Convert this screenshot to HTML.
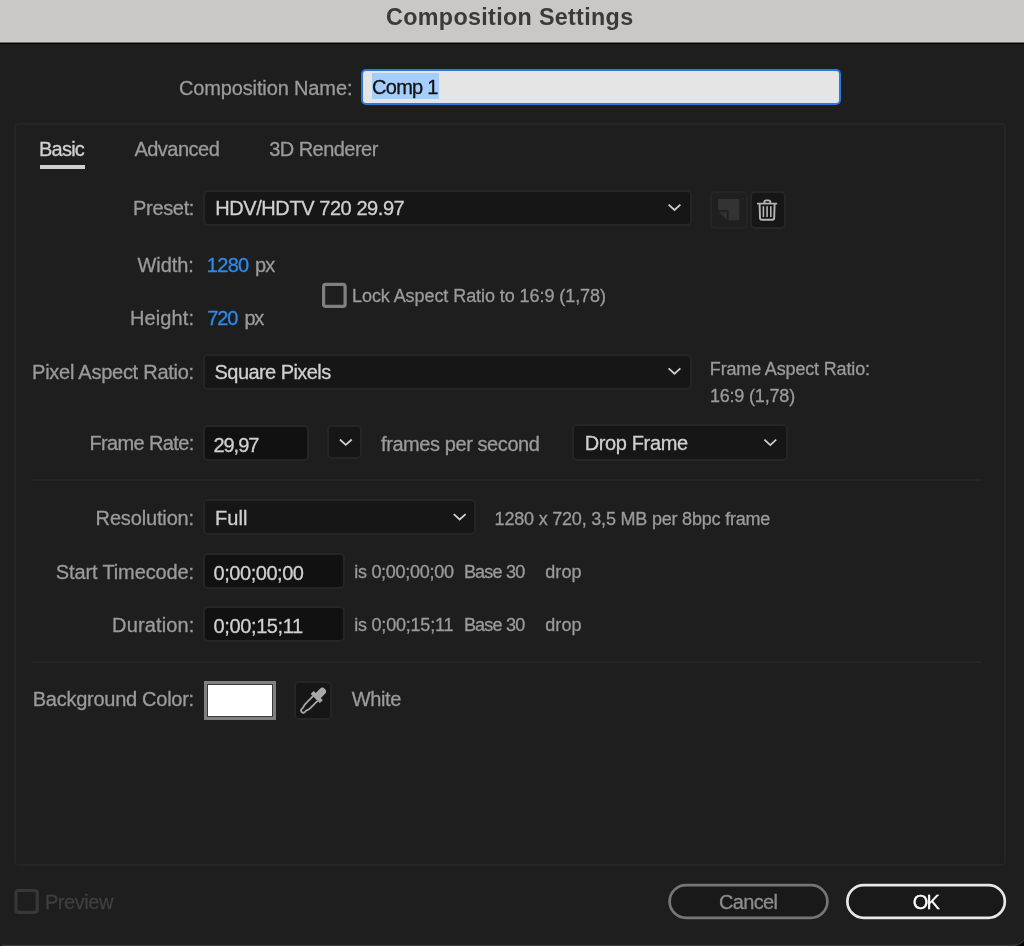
<!DOCTYPE html>
<html lang="en">
<head>
<meta charset="utf-8">
<title>Composition Settings</title>
<style>
html,body{margin:0;padding:0;}
body{width:1024px;height:946px;overflow:hidden;background:#1e1e1e;position:relative;font-family:"Liberation Sans",sans-serif;}
.abs,.t,.dd,.inp,.ibtn,.sep{position:absolute;box-sizing:border-box;}
.t{white-space:nowrap;line-height:1;-webkit-text-stroke:0.3px currentColor;}
#titlebar{left:0;top:0;width:1024px;height:44px;background:linear-gradient(to bottom,#cac8c6 0,#cac8c6 41px,#cfcdcb 41px,#cfcdcb 42px,#6f6e6d 42px,#6f6e6d 43px,#020202 43px,#020202 44px);}
#group{left:14px;top:123px;width:992px;height:743px;border:2px solid #252525;border-radius:5px;}
.dd{background:#161616;border:2px solid #252525;border-radius:5px;height:36px;}
.inp{background:#111111;border:2px solid #252525;border-radius:5px;height:36px;}
.ibtn{background:#161616;border:2px solid #252525;border-radius:5px;}
.sep{height:2px;background:#252525;left:32px;width:950px;}
svg{position:absolute;overflow:visible;}
</style>
</head>
<body>
<div id="titlebar" class="abs"></div>

<!-- composition name field (focused, text selected) -->
<div class="abs" style="left:361px;top:69px;width:480px;height:36px;background:#e5e5e5;border:2px solid #2a78e0;border-radius:5px;"></div>
<div class="abs" style="left:372px;top:73px;width:67px;height:26px;background:#a6cefd;"></div>

<div id="group" class="abs"></div>

<!-- active tab underline -->
<div class="abs" style="left:40px;top:165px;width:45px;height:4px;background:#cfcfcf;"></div>

<!-- preset row -->
<div class="dd" style="left:203px;top:190px;width:489px;"></div>
<div class="ibtn" style="left:710px;top:191px;width:38px;height:38px;background:#1f1f1f;"></div>
<div class="ibtn" style="left:750px;top:191px;width:36px;height:38px;"></div>

<!-- pixel aspect ratio -->
<div class="dd" style="left:203px;top:354px;width:489px;"></div>

<!-- frame rate -->
<div class="inp" style="left:203px;top:425px;width:106px;"></div>
<div class="ibtn" style="left:327px;top:425px;width:35px;height:34px;"></div>
<div class="dd" style="left:572px;top:424px;width:216px;height:37px;"></div>

<div class="sep" style="top:479px;"></div>

<!-- resolution -->
<div class="dd" style="left:203px;top:499px;width:273px;"></div>

<!-- start timecode / duration -->
<div class="inp" style="left:203px;top:553px;width:142px;"></div>
<div class="inp" style="left:203px;top:606px;width:142px;"></div>

<div class="sep" style="top:661px;"></div>

<!-- background colour -->
<div class="abs" style="left:204px;top:681px;width:72px;height:39px;background:#ffffff;border:3px solid #808080;box-shadow:inset 0 0 0 1px #3a3a3a;"></div>
<div class="ibtn" style="left:294px;top:681px;width:38px;height:39px;"></div>

<!-- icons, checkboxes, buttons -->
<svg width="1024" height="946" viewBox="0 0 1024 946" style="left:0;top:0;" fill="none">
  <!-- dropdown chevrons -->
  <g stroke="#cfcfcf" stroke-width="1.8" fill="none">
    <path d="M668.6 204.6 L674.5 210 L680.4 204.6"/>
    <path d="M668.6 368.3 L674.5 373.7 L680.4 368.3"/>
    <path d="M339.9 439.5 L345.8 444.9 L351.7 439.5"/>
    <path d="M764.4 439.7 L770.3 445.1 L776.2 439.7"/>
    <path d="M453.8 514.1 L459.7 519.5 L465.6 514.1"/>
  </g>
  <!-- checkboxes -->
  <rect x="323.6" y="284.4" width="21.5" height="22" rx="2.2" stroke="#808080" stroke-width="3.2" fill="none"/>
  <rect x="15.9" y="890.5" width="21.3" height="21.8" rx="2.2" stroke="#373737" stroke-width="3.2" fill="none"/>
  <!-- buttons -->
  <rect x="669.65" y="885.05" width="157.7" height="32.8" rx="16.4" stroke="#767676" stroke-width="2.7" fill="#191919"/>
  <rect x="847.35" y="885.05" width="157.5" height="32.8" rx="16.4" stroke="#e8e8e8" stroke-width="2.7" fill="#191919"/>
  <!-- new preset (disabled) -->
  <path d="M718.2 199 H739.3 V220.2 H728.5 V210.3 H718.2 Z" fill="#333333"/>
  <path d="M718.4 211.8 H727 V220 Z" fill="#303030"/>
  <!-- trash -->
  <g stroke="#b4b4b4" fill="none">
    <path d="M764.3 203.2 V202.3 A1.9 1.9 0 0 1 766.2 200.4 H768.4 A1.9 1.9 0 0 1 770.3 202.3 V203.2" stroke-width="1.9"/>
    <path d="M757 203.6 H777.2" stroke-width="1.7"/>
    <path d="M759.6 204 L760 217.8 A1.9 1.9 0 0 0 761.9 219.7 H772.3 A1.9 1.9 0 0 0 774.2 217.8 L774.6 204" stroke-width="1.9"/>
    <path d="M763.4 206.2 V217 M767.1 206.2 V217 M770.8 206.2 V217" stroke-width="1.6"/>
  </g>
  <!-- eyedropper -->
  <g transform="translate(324.9 688.9) rotate(45)">
    <path d="M-3.65 10 V3.65 A3.65 3.65 0 0 1 3.65 3.65 V10 Z" fill="#a8a8a8"/>
    <rect x="-6.5" y="9.4" width="13" height="4.3" rx="0.5" fill="#a8a8a8"/>
    <path d="M-3.25 13.6 V25 C-3.25 27 -2.15 27 -2.15 29 V30.55 A2.15 2.15 0 0 0 2.15 30.55 V29 C2.15 27 3.25 27 3.25 25 V13.6" stroke="#a8a8a8" stroke-width="1.75" fill="none"/>
  </g>
  <!-- window bottom edge -->
  <rect x="0" y="944.7" width="1024" height="1.3" fill="#363636"/>
  <path d="M1014 946 Q1021.5 945.6 1024 940.6 L1024 946 Z" fill="#000000"/>
  <path d="M1010 945.2 Q1020.5 945.4 1024 939.8" stroke="#323232" stroke-width="1.4" fill="none"/>
  <path d="M0 944.4 Q0.6 945.8 3 946 L0 946 Z" fill="#000000"/>
</svg>


<!-- text -->
<div id="txt" class="abs" style="left:0;top:0;width:1024px;height:946px;will-change:transform;">
<span class="t" style="left:386.1px;top:5.9px;font-size:23.3px;color:#3a3a3a;letter-spacing:0.33px;font-weight:700;-webkit-text-stroke:0">Composition Settings</span>
<span class="t" style="left:178.9px;top:77.6px;font-size:20px;color:#9b9b9b;letter-spacing:-0.13px">Composition Name:</span>
<span class="t" style="left:372.1px;top:76.9px;font-size:20px;color:#111111;letter-spacing:-0.75px">Comp 1</span>
<span class="t" style="left:39.1px;top:139.1px;font-size:20px;color:#d2d2d2;letter-spacing:-0.81px">Basic</span>
<span class="t" style="left:134.4px;top:139.1px;font-size:20px;color:#9b9b9b;letter-spacing:-0.50px">Advanced</span>
<span class="t" style="left:269.2px;top:139.1px;font-size:20px;color:#9b9b9b;letter-spacing:-0.54px">3D Renderer</span>
<span class="t" style="left:133.1px;top:198.1px;font-size:20px;color:#9b9b9b;letter-spacing:-0.34px">Preset:</span>
<span class="t" style="left:215.3px;top:198.1px;font-size:20px;color:#d0d0d0;letter-spacing:-0.43px">HDV/HDTV 720 29.97</span>
<span class="t" style="left:137.4px;top:254.8px;font-size:20px;color:#9b9b9b;letter-spacing:-0.03px">Width:</span>
<span class="t" style="left:206.7px;top:254.8px;font-size:20px;color:#2d8ceb;letter-spacing:-0.65px">1280</span>
<span class="t" style="left:255.1px;top:254.8px;font-size:20px;color:#9b9b9b;letter-spacing:-1.05px">px</span>
<span class="t" style="left:130.1px;top:308.1px;font-size:20px;color:#9b9b9b;letter-spacing:0.08px">Height:</span>
<span class="t" style="left:207.2px;top:308.1px;font-size:20px;color:#2d8ceb;letter-spacing:-1.10px">720</span>
<span class="t" style="left:244.4px;top:308.1px;font-size:20px;color:#9b9b9b;letter-spacing:-1.30px">px</span>
<span class="t" style="left:352.0px;top:286.8px;font-size:18px;color:#9b9b9b;letter-spacing:-0.07px">Lock Aspect Ratio to 16:9 (1,78)</span>
<span class="t" style="left:32.1px;top:361.8px;font-size:20px;color:#9b9b9b;letter-spacing:-0.26px">Pixel Aspect Ratio:</span>
<span class="t" style="left:214.6px;top:361.8px;font-size:20px;color:#d0d0d0;letter-spacing:-0.57px">Square Pixels</span>
<span class="t" style="left:709.8px;top:360.1px;font-size:18px;color:#9b9b9b;letter-spacing:-0.16px">Frame Aspect Ratio:</span>
<span class="t" style="left:709.9px;top:386.7px;font-size:18px;color:#9b9b9b;letter-spacing:-0.18px">16:9 (1,78)</span>
<span class="t" style="left:89.4px;top:433.4px;font-size:20px;color:#9b9b9b;letter-spacing:-0.63px">Frame Rate:</span>
<span class="t" style="left:213.4px;top:435.0px;font-size:20px;color:#d0d0d0;letter-spacing:-1.02px">29,97</span>
<span class="t" style="left:381.0px;top:433.7px;font-size:20px;color:#9b9b9b;letter-spacing:-0.42px">frames per second</span>
<span class="t" style="left:584.7px;top:433.1px;font-size:20px;color:#d0d0d0;letter-spacing:-0.37px">Drop Frame</span>
<span class="t" style="left:95.6px;top:507.8px;font-size:20px;color:#9b9b9b;letter-spacing:-0.15px">Resolution:</span>
<span class="t" style="left:215.1px;top:507.8px;font-size:20px;color:#d0d0d0;letter-spacing:0.04px">Full</span>
<span class="t" style="left:494.6px;top:509.8px;font-size:18px;color:#9b9b9b;letter-spacing:-0.20px">1280 x 720, 3,5 MB per 8bpc frame</span>
<span class="t" style="left:55.8px;top:561.5px;font-size:20px;color:#9b9b9b;letter-spacing:-0.13px">Start Timecode:</span>
<span class="t" style="left:213.6px;top:563.1px;font-size:20px;color:#d0d0d0;letter-spacing:-0.46px">0;00;00;00</span>
<span class="t" style="left:354.2px;top:562.8px;font-size:18px;color:#9b9b9b;letter-spacing:-0.27px">is 0;00;00;00</span>
<span class="t" style="left:463.9px;top:562.8px;font-size:18px;color:#9b9b9b;letter-spacing:-0.78px">Base 30</span>
<span class="t" style="left:545.2px;top:562.8px;font-size:18px;color:#9b9b9b;letter-spacing:0.12px">drop</span>
<span class="t" style="left:112.1px;top:614.6px;font-size:20px;color:#9b9b9b;letter-spacing:0.13px">Duration:</span>
<span class="t" style="left:213.6px;top:616.1px;font-size:20px;color:#d0d0d0;letter-spacing:-0.39px">0;00;15;11</span>
<span class="t" style="left:354.2px;top:616.0px;font-size:18px;color:#9b9b9b;letter-spacing:-0.21px">is 0;00;15;11</span>
<span class="t" style="left:463.9px;top:616.0px;font-size:18px;color:#9b9b9b;letter-spacing:-0.78px">Base 30</span>
<span class="t" style="left:545.2px;top:616.0px;font-size:18px;color:#9b9b9b;letter-spacing:0.12px">drop</span>
<span class="t" style="left:32.8px;top:689.0px;font-size:20px;color:#9b9b9b;letter-spacing:-0.27px">Background Color:</span>
<span class="t" style="left:351.7px;top:689.0px;font-size:20px;color:#9b9b9b;letter-spacing:-0.36px">White</span>
<span class="t" style="left:44.9px;top:892.1px;font-size:20px;color:#3f3f3f;letter-spacing:-0.44px">Preview</span>
<span class="t" style="left:719.0px;top:891.5px;font-size:20px;color:#8c8c8c;letter-spacing:-0.67px">Cancel</span>
<span class="t" style="left:912.7px;top:891.5px;font-size:20px;color:#ffffff;letter-spacing:-1.80px">OK</span>
</div>
</body>
</html>
